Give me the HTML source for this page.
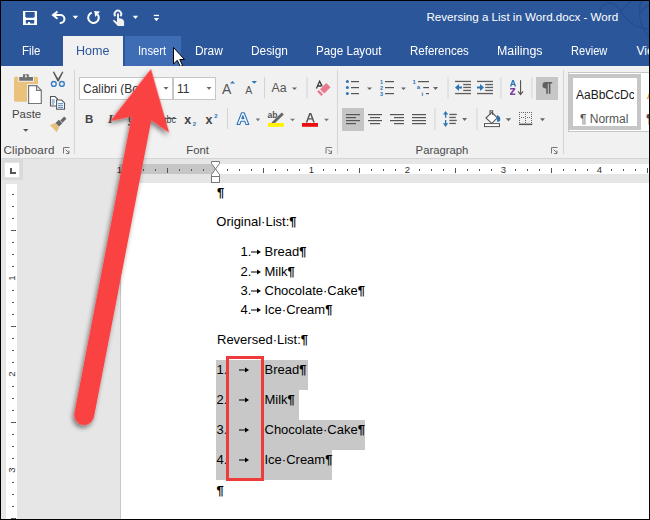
<!DOCTYPE html>
<html><head><meta charset="utf-8">
<style>
*{margin:0;padding:0;box-sizing:border-box}
html,body{width:650px;height:520px;overflow:hidden;background:#E6E6E6}
body{position:relative;font-family:"Liberation Sans",sans-serif}
.a{position:absolute}
.t{position:absolute;line-height:1;white-space:nowrap}
#title{left:0;top:0;width:650px;height:66px;background:#2B579A}
#ribbon{left:0;top:66px;width:650px;height:93px;background:#F1F1F1;border-bottom:1px solid #D5D5D5}
.tab{color:#fff;font-size:12px}
.sep{position:absolute;width:1px;background:#D4D4D4}
.gl{color:#4a4a4a;font-size:11px}
.doc{color:#000;font-size:13px}
</style></head><body>

<div id="title" class="a"></div>
<!-- decorative circles -->
<svg class="a" style="left:560px;top:0" width="90" height="66" viewBox="560 0 90 66">
  <g fill="none" stroke="#234D8C" stroke-width="1.3">
    <path d="M600.5 11 C600 3, 613 -1, 620 10 S633 27, 650 29.5"/>
    <path d="M620 12 L632 0"/>
    <path d="M642 0 C637 10, 639 26, 650 38"/>
    <path d="M641 13 C643 8, 646 6, 650 5"/>
  </g>
</svg>

<!-- QAT icons -->
<svg class="a" style="left:0;top:0" width="170" height="36" viewBox="0 0 170 36">
  <rect x="23" y="11" width="14" height="14" fill="#fff"/>
  <path d="M25.3 12.1 H34.7 V16.6 L33.6 17.7 H26.4 L25.3 16.6 Z" fill="#2B579A"/>
  <path d="M25.8 20 H34.2 V23.6 H30.1 V21.9 H28 V23.6 H25.8 Z" fill="#2B579A"/>
  <g fill="none" stroke="#fff" stroke-width="2">
    <path d="M57.5 11.5 L53 15.1 L57.5 18.7"/>
    <path d="M53 15.1 H60.5 A3.95 3.95 0 0 1 60.5 23 H59.8"/>
  </g>
  <path d="M72.6 15.8 H78.2 L75.4 19.1 Z" fill="#fff"/>
  <path d="M91.8 12.6 A5.3 5.3 0 1 0 97.6 14.3" fill="none" stroke="#fff" stroke-width="2"/>
  <path d="M94.2 11 L100 11.4 L95.3 17 Z" fill="#fff"/>
  <path d="M115.5 16.2 A3.3 3.3 0 1 1 120.3 16.2" fill="none" stroke="#F0F0F0" stroke-width="1.9"/>
  <path d="M117 13.5 H119 V18.2 Q123.6 18.6 124.1 21.6 V25.9 H117.8 L112.8 20.8 Q113.3 19.7 114.6 20.3 L117 22 Z" fill="#F0F0F0"/>
  <path d="M132.7 15.8 H138.2 L135.45 19.1 Z" fill="#fff"/>
  <rect x="153.8" y="14.8" width="5.2" height="1.3" fill="#fff"/>
  <path d="M153.8 18 H159 L156.4 21.3 Z" fill="#fff"/>
</svg>

<div class="t" style="left:426.5px;top:11.3px;font-size:11.6px;color:#fff">Reversing a List in Word.docx - Word</div>

<!-- tabs -->
<div class="a" style="left:63px;top:36px;width:60px;height:30px;background:#F1F1F1"></div>
<div class="a" style="left:124.5px;top:36px;width:56.7px;height:30px;background:#3E6DB6"></div>
<div class="t tab" style="left:21.8px;top:44.7px;transform:scaleX(0.956);transform-origin:0 0">File</div>
<div class="t tab" style="left:76.0px;top:44.7px;color:#2B579A;transform:scaleX(1.048);transform-origin:0 0">Home</div>
<div class="t tab" style="left:138.2px;top:44.9px;transform:scaleX(0.937);transform-origin:0 0">Insert</div>
<div class="t tab" style="left:195.2px;top:44.7px;transform:scaleX(0.993);transform-origin:0 0">Draw</div>
<div class="t tab" style="left:251.0px;top:44.7px;transform:scaleX(0.989);transform-origin:0 0">Design</div>
<div class="t tab" style="left:316.0px;top:44.7px;transform:scaleX(0.970);transform-origin:0 0">Page Layout</div>
<div class="t tab" style="left:410.0px;top:44.7px;transform:scaleX(0.958);transform-origin:0 0">References</div>
<div class="t tab" style="left:497.0px;top:44.7px;transform:scaleX(1.035);transform-origin:0 0">Mailings</div>
<div class="t tab" style="left:571.0px;top:44.7px;transform:scaleX(0.923);transform-origin:0 0">Review</div>
<div class="t tab" style="left:636.5px;top:44.7px">Vie</div>

<div id="ribbon" class="a"></div>
<!-- ============ RIBBON CONTENT ============ -->
<!-- Clipboard group -->
<svg class="a" style="left:0;top:66px" width="80" height="92" viewBox="0 66 80 92">
  <!-- paste clipboard -->
  <rect x="14" y="76.8" width="24" height="25" rx="1.6" fill="#EAC27C"/>
  <path d="M18.2 76 H24 V74.5 Q24 73.2 25.3 73.2 H27 Q28.3 73.2 28.3 74.5 V76 H34 V81.8 H18.2 Z" fill="#F1F1F1"/>
  <path d="M19.2 77 H23 V74.2 H28.8 V77 H33 V80.7 H19.2 Z" fill="#707070"/>
  <rect x="25" y="75.3" width="1.8" height="2" fill="#F1F1F1"/>
  <rect x="27" y="84" width="15.8" height="21" fill="#F1F1F1"/>
  <path d="M28.6 85.6 H36.6 L41.3 90.3 V103.5 H28.6 Z" fill="#fff" stroke="#777" stroke-width="1.2"/>
  <path d="M36.6 85.6 V90.3 H41.3" fill="none" stroke="#777" stroke-width="1.2"/>
  <!-- dropdown -->
  <path d="M23 129 H28.5 L25.75 131.8 Z" fill="#555"/>
  <!-- scissors -->
  <path d="M52.8 72 L54 71.6 L59.2 80.4 L57.6 81.4 Z" fill="#555"/>
  <path d="M63.4 72 L62.2 71.6 L57 80.4 L58.6 81.4 Z" fill="#555"/>
  <g fill="none" stroke="#3D7EC4" stroke-width="1.4">
    <circle cx="53.8" cy="83.9" r="2.4"/><circle cx="61.9" cy="83.9" r="2.4"/>
  </g>
  <!-- copy -->
  <g fill="#fff" stroke="#555" stroke-width="1.1">
    <path d="M50.5 96.5 H55 L57.5 99 V106 H50.5 Z"/>
    <path d="M56.6 100 H61.6 L64.5 102.9 V109.3 H56.6 Z"/>
  </g>
  <g fill="#3D7EC4">
    <rect x="51.8" y="99.5" width="3" height="1"/><rect x="51.8" y="101.5" width="3" height="1"/><rect x="51.8" y="103.5" width="2.2" height="1"/>
    <rect x="58" y="103.2" width="5" height="1"/><rect x="58" y="105.2" width="5" height="1"/><rect x="58" y="107.2" width="5" height="1"/>
  </g>
  <!-- format painter -->
  <path d="M50 125.3 L55.3 122.8 L59.3 126.8 L56.8 132.2 Z" fill="#E8C07D"/>
  <path d="M55.6 123 L58.8 119.8 L62.3 123.3 L59.1 126.5 Z" fill="#666"/>
  <path d="M60.3 120.5 L64.2 116.6 L66.4 118.8 L62.5 122.7 Z" fill="#666"/>
  <!-- dialog launcher -->
  <g fill="none" stroke="#777" stroke-width="1"><path d="M63.5 153.5 V147.5 H69.5"/><path d="M65.5 149.5 L69 153 M69 150.5 V153.5 H66"/></g>
</svg>
<div class="t" style="left:12px;top:109.2px;font-size:11.4px;color:#444">Paste</div>
<div class="t gl" style="left:3.6px;top:144.4px;font-size:11.6px;color:#555;letter-spacing:0.15px;color:#4a4a4a">Clipboard</div>
<div class="sep" style="left:74px;top:70px;height:84px"></div>

<!-- Font group -->
<div class="a" style="left:79px;top:77px;width:94px;height:23px;background:#fff;border:1px solid #C6C6C6"></div>
<div class="a" style="left:173px;top:77px;width:43px;height:23px;background:#fff;border:1px solid #C6C6C6"></div>
<div class="t" style="left:83px;top:83px;font-size:12px;color:#333;width:68px;overflow:hidden">Calibri (Bo</div>
<div class="t" style="left:177px;top:83px;font-size:12px;color:#333">11</div>
<svg class="a" style="left:70px;top:66px" width="270" height="92" viewBox="70 66 270 92">
  <path d="M163.5 87 H168.5 L166 89.7 Z" fill="#666"/>
  <path d="M206.5 87 H211.5 L209 89.7 Z" fill="#666"/>
  <!-- grow/shrink -->
  <text x="222" y="94" font-family="Liberation Sans" font-size="14" fill="#555">A</text>
  <path d="M230 83.6 H235 L232.5 81 Z" fill="#2E75B6"/>
  <text x="245.3" y="94" font-family="Liberation Sans" font-size="10.5" fill="#555">A</text>
  <path d="M251.6 81 H257 L254.3 83.8 Z" fill="#2E75B6"/>
  <rect x="264" y="77" width="1" height="21.5" fill="#D4D4D4"/>
  <text x="271.5" y="92" font-family="Liberation Sans" font-size="12.3" fill="#555">Aa</text>
  <path d="M292 87.4 H297 L294.5 90 Z" fill="#666"/>
  <rect x="306.5" y="77" width="1" height="21.5" fill="#D4D4D4"/>
  <!-- clear formatting -->
  <path d="M316.4 88.6 L319.6 81.3 L322.2 86.4 M317.8 86 H321" fill="none" stroke="#3a3a3a" stroke-width="1.3"/>
  <path d="M320 89.2 L326.3 82.9 L330.6 87.2 L324.3 93.5 Z" fill="#E8798F"/>
  <path d="M317.2 91.7 L318.9 90 L323.1 94.2 L321.4 95.9 Z" fill="#E8798F"/>
  <!-- row 2 -->
  <text x="85" y="123.3" font-family="Liberation Sans" font-weight="bold" font-size="11.5" fill="#444">B</text>
  <text x="108" y="122.8" font-family="Liberation Serif" font-style="italic" font-weight="bold" font-size="12.5" fill="#444">I</text>
  <text x="128" y="123.3" font-family="Liberation Sans" font-size="11.5" fill="#444" text-decoration="underline">U</text>
  <text x="161.5" y="122.8" font-family="Liberation Sans" font-size="11.5" fill="#444" textLength="14.5" lengthAdjust="spacingAndGlyphs">abc</text>
  <rect x="161.5" y="118" width="15" height="1" fill="#555"/>
  <text x="184.2" y="123.6" font-family="Liberation Sans" font-weight="bold" font-size="12.5" fill="#444">x</text>
  <text x="192.8" y="125.8" font-family="Liberation Sans" font-weight="bold" font-size="6" fill="#2E75B6">2</text>
  <text x="205.6" y="123.6" font-family="Liberation Sans" font-weight="bold" font-size="12.5" fill="#444">x</text>
  <text x="214.3" y="117.6" font-family="Liberation Sans" font-weight="bold" font-size="6" fill="#2E75B6">2</text>
  <rect x="227" y="108" width="1" height="21" fill="#D4D4D4"/>
  <!-- text effects -->
  <path d="M237 124.5 L241.6 112.8 H244.2 L248.8 124.5 H246 L244.8 121.2 H241 L239.8 124.5 Z M241.8 118.8 H244 L242.9 115.6 Z" fill="#fff" stroke="#2E75B6" stroke-width="1.1" stroke-linejoin="round"/>
  <path d="M255.6 118.6 H260.2 L257.9 121.2 Z" fill="#777"/>
  <!-- highlight -->
  <text x="267.6" y="118.3" font-family="Liberation Sans" font-weight="bold" font-size="8.6" fill="#555">ab</text>
  <path d="M271.5 122.5 L281.8 112.6 L283.8 114.6 L273.5 124.5 Z" fill="#666"/>
  <rect x="268" y="123" width="15.8" height="3.8" fill="#FFF100"/>
  <path d="M290 118.7 H295 L292.5 121.2 Z" fill="#777"/>
  <!-- font color -->
  <path d="M305.8 122.4 L309.3 113 H311.3 L314.8 122.4 H313.2 L312.2 119.6 H308.4 L307.4 122.4 Z M308.9 118.2 H311.7 L310.3 114.4 Z" fill="#555"/>
  <rect x="302" y="123" width="16" height="3.8" fill="#E81010"/>
  <path d="M324 118.7 H329 L326.5 121.2 Z" fill="#777"/>
  <g fill="none" stroke="#777" stroke-width="1"><path d="M326 153.5 V147.5 H332"/><path d="M328 149.5 L331.5 153 M331.5 150.5 V153.5 H328.5"/></g>
</svg>
<div class="t gl" style="left:186.3px;top:144.8px;font-size:11.3px;color:#4a4a4a">Font</div>
<div class="sep" style="left:337px;top:70px;height:84px"></div>

<!-- Paragraph group -->
<svg class="a" style="left:337px;top:66px" width="230" height="92" viewBox="337 66 230 92">
  <g fill="#2E75B6">
    <circle cx="347.4" cy="81.4" r="1.5"/><circle cx="347.4" cy="87.4" r="1.5"/><circle cx="347.4" cy="93.4" r="1.5"/>
  </g>
  <g fill="#555"><rect x="351" y="81" width="8" height="1.2"/><rect x="351" y="87" width="8" height="1.2"/><rect x="351" y="93" width="8" height="1.2"/></g>
  <path d="M367 87.4 H372 L369.5 90 Z" fill="#666"/>
  <g font-family="Liberation Sans" font-size="5.5" font-weight="bold" fill="#2E75B6">
    <text x="380" y="84">1</text><text x="380" y="90">2</text><text x="380" y="96">3</text>
  </g>
  <g fill="#555"><rect x="385" y="81" width="9" height="1.2"/><rect x="385" y="87" width="9" height="1.2"/><rect x="385" y="93" width="9" height="1.2"/></g>
  <path d="M401 87.4 H406 L403.5 90 Z" fill="#666"/>
  <g font-family="Liberation Sans" font-size="6" font-weight="bold" fill="#2E75B6">
    <text x="412.6" y="84">1</text><text x="416.8" y="89">a</text><text x="421.5" y="96">i</text>
  </g>
  <g fill="#555"><rect x="418" y="81" width="11" height="1.2"/><rect x="423.2" y="87" width="5.8" height="1.2"/><rect x="426" y="93" width="3" height="1.2"/></g>
  <path d="M433 87 H438.1 L435.55 90.1 Z" fill="#666"/>
  <rect x="447.5" y="77" width="1" height="21.5" fill="#D4D4D4"/>
  <!-- decrease indent -->
  <g fill="#5f5f5f">
    <rect x="455" y="80.8" width="16" height="1.3"/><rect x="463.2" y="83.9" width="7.8" height="1.3"/><rect x="463.2" y="86.8" width="7.8" height="1.3"/><rect x="463.2" y="89.8" width="7.8" height="1.3"/><rect x="455" y="92.9" width="16" height="1.3"/>
    <rect x="477" y="80.8" width="16" height="1.3"/><rect x="485.2" y="83.9" width="7.8" height="1.3"/><rect x="485.2" y="86.8" width="7.8" height="1.3"/><rect x="485.2" y="89.8" width="7.8" height="1.3"/><rect x="477" y="92.9" width="16" height="1.3"/>
  </g>
  <g fill="#2E75B6">
    <path d="M455 87.4 L459 83.9 V86.4 H462 V88.5 H459 V91 Z"/>
    <path d="M484 87.4 L480 83.9 V86.4 H477 V88.5 H480 V91 Z"/>
  </g>
  <rect x="500.4" y="77" width="1" height="21.5" fill="#D4D4D4"/>
  <!-- sort -->
  <path d="M509.9 86.5 L512.3 80 H513.8 L516.2 86.5 H514.7 L514.2 85 H511.9 L511.4 86.5 Z M512.3 83.7 H513.8 L513.05 81.5 Z" fill="#2E75B6"/>
  <path d="M510.1 88.1 H515.2 V89.5 L512.1 93.6 H515.3 V95 H510 V93.6 L513.1 89.5 H510.1 Z" fill="#8040A8"/>
  <rect x="520" y="80.2" width="1.1" height="14.3" fill="#555"/>
  <path d="M518.1 91.4 L520.55 94.6 L523 91.4" fill="none" stroke="#555" stroke-width="1.1"/>
  <rect x="531.4" y="77" width="1" height="21.5" fill="#D4D4D4"/>
  <!-- pilcrow button -->
  <rect x="536" y="77" width="22" height="23" fill="#C6C6C6"/>
  <path d="M552.2 82 H545.8 A3.3 3.2 0 0 0 545.8 88.4 H546.2 V93.8 H547.8 V83.4 H548.8 V93.8 H550.4 V83.4 H552.2 Z" fill="#5f5f5f"/>
  <!-- row 2: align -->
  <rect x="342" y="108" width="22" height="23" fill="#C5C5C5"/>
  <g fill="#555">
    <rect x="346" y="114" width="14" height="1.2"/><rect x="346" y="117" width="10" height="1.2"/><rect x="346" y="120" width="14" height="1.2"/><rect x="346" y="123" width="10" height="1.2"/>
    <rect x="368" y="114" width="14" height="1.2"/><rect x="370" y="117" width="10" height="1.2"/><rect x="368" y="120" width="14" height="1.2"/><rect x="370" y="123" width="10" height="1.2"/>
    <rect x="390" y="114" width="14" height="1.2"/><rect x="394" y="117" width="10" height="1.2"/><rect x="390" y="120" width="14" height="1.2"/><rect x="394" y="123" width="10" height="1.2"/>
    <rect x="412" y="114" width="14" height="1.2"/><rect x="412" y="117" width="14" height="1.2"/><rect x="412" y="120" width="14" height="1.2"/><rect x="412" y="123" width="14" height="1.2"/>
  </g>
  <rect x="434.4" y="108" width="1" height="22" fill="#D4D4D4"/>
  <!-- line spacing -->
  <g fill="#5f5f5f"><rect x="449.3" y="113.8" width="7.5" height="1.3"/><rect x="449.3" y="116.8" width="6.5" height="1.3"/><rect x="449.3" y="119.8" width="7.5" height="1.3"/><rect x="449.3" y="122.8" width="6.5" height="1.3"/></g>
  <g fill="#2E75B6">
    <path d="M445.6 111 L448.2 114.4 H446.3 V117.8 H445 V114.4 H443 Z"/>
    <path d="M445.6 126.9 L448.2 123.2 H446.3 V120.1 H445 V123.2 H443 Z"/>
  </g>
  <path d="M462.1 118 H467 L464.55 120.9 Z" fill="#666"/>
  <rect x="476.4" y="108" width="1" height="22" fill="#D4D4D4"/>
  <!-- shading -->
  <path d="M486 118 L491.8 112.4 L497.4 117.8 L491.8 123.3 Z" fill="#fff" stroke="#555" stroke-width="1.1"/>
  <path d="M490 115 V110.8 H492.6 V115" fill="none" stroke="#555" stroke-width="1.1"/>
  <path d="M497 115 Q501 116.5 500.2 120.4 Q499.2 122.2 497 121.4 Z" fill="#2E75B6"/>
  <rect x="484.5" y="123.6" width="15" height="3" fill="#fff" stroke="#555" stroke-width="1"/>
  <path d="M505.7 118.2 H511.2 L508.45 121.2 Z" fill="#666"/>
  <!-- borders -->
  <g fill="#666"><rect x="519" y="112" width="1" height="1"/><rect x="519" y="114" width="1" height="1"/><rect x="519" y="116" width="1" height="1"/><rect x="519" y="118" width="1" height="1"/><rect x="519" y="120" width="1" height="1"/><rect x="519" y="122" width="1" height="1"/><rect x="525" y="112" width="1" height="1"/><rect x="525" y="114" width="1" height="1"/><rect x="525" y="116" width="1" height="1"/><rect x="525" y="118" width="1" height="1"/><rect x="525" y="120" width="1" height="1"/><rect x="525" y="122" width="1" height="1"/><rect x="531" y="112" width="1" height="1"/><rect x="531" y="114" width="1" height="1"/><rect x="531" y="116" width="1" height="1"/><rect x="531" y="118" width="1" height="1"/><rect x="531" y="120" width="1" height="1"/><rect x="531" y="122" width="1" height="1"/><rect x="521" y="112" width="1" height="1"/><rect x="523" y="112" width="1" height="1"/><rect x="527" y="112" width="1" height="1"/><rect x="529" y="112" width="1" height="1"/><rect x="521" y="117" width="1" height="1"/><rect x="523" y="117" width="1" height="1"/><rect x="527" y="117" width="1" height="1"/><rect x="529" y="117" width="1" height="1"/></g>
  <rect x="519" y="123.6" width="13.3" height="1.5" fill="#555"/>
  <path d="M540 118.2 H545 L542.5 121.2 Z" fill="#666"/>
  <g fill="none" stroke="#777" stroke-width="1"><path d="M551.5 153.5 V147.5 H557.5"/><path d="M553.5 149.5 L557 153 M557 150.5 V153.5 H554"/></g>
</svg>
<div class="t gl" style="left:415.6px;top:144.8px;font-size:11.3px;color:#4a4a4a">Paragraph</div>
<div class="sep" style="left:562.5px;top:70px;height:84px"></div>

<!-- Styles gallery -->
<div class="a" style="left:568px;top:72px;width:90px;height:60px;background:#fff;border:1px solid #C6C6C6"></div>
<div class="a" style="left:569px;top:74px;width:72px;height:56px;border:4px solid #C6C6C6"></div>
<div class="t" style="left:576px;top:89px;font-size:12px;color:#1a1a1a;width:58px;overflow:hidden">AaBbCcDc</div>
<div class="t" style="left:580px;top:113px;font-size:12px;color:#555">¶ Normal</div>
<div class="t" style="left:647px;top:89px;font-size:12px;color:#E08A00">A</div>
<div class="t" style="left:646px;top:113px;font-size:12px;color:#555">¶</div>



<!-- ============ RULER + WORKSPACE ============ -->
<div class="a" style="left:2px;top:159px;width:21px;height:21px;background:#DADADA"></div>
<div class="a" style="left:4px;top:161.5px;width:16px;height:16px;background:#fff;border:1.3px solid #E2E2E2"></div>
<div class="a" style="left:10px;top:168px;width:2px;height:6px;background:#555"></div>
<div class="a" style="left:10px;top:172px;width:6px;height:2px;background:#555"></div>
<!-- horizontal ruler -->
<div class="a" style="left:119px;top:164px;width:97px;height:10px;background:#C6C6C6"></div>
<div class="a" style="left:216px;top:164px;width:434px;height:10px;background:#fff"></div>
<svg class="a" style="left:100px;top:158px" width="550" height="30" viewBox="100 158 550 30">
  <g fill="#555"><rect x="131" y="169" width="1" height="2"/><rect x="143" y="169" width="1" height="2"/><rect x="155" y="169" width="1" height="2"/><rect x="167" y="168" width="1" height="5"/><rect x="179" y="169" width="1" height="2"/><rect x="191" y="169" width="1" height="2"/><rect x="203" y="169" width="1" height="2"/><rect x="227" y="169" width="1" height="2"/><rect x="239" y="169" width="1" height="2"/><rect x="251" y="169" width="1" height="2"/><rect x="263" y="168" width="1" height="5"/><rect x="275" y="169" width="1" height="2"/><rect x="287" y="169" width="1" height="2"/><rect x="299" y="169" width="1" height="2"/><rect x="323" y="169" width="1" height="2"/><rect x="335" y="169" width="1" height="2"/><rect x="347" y="169" width="1" height="2"/><rect x="359" y="168" width="1" height="5"/><rect x="371" y="169" width="1" height="2"/><rect x="383" y="169" width="1" height="2"/><rect x="395" y="169" width="1" height="2"/><rect x="419" y="169" width="1" height="2"/><rect x="431" y="169" width="1" height="2"/><rect x="443" y="169" width="1" height="2"/><rect x="455" y="168" width="1" height="5"/><rect x="467" y="169" width="1" height="2"/><rect x="479" y="169" width="1" height="2"/><rect x="491" y="169" width="1" height="2"/><rect x="515" y="169" width="1" height="2"/><rect x="527" y="169" width="1" height="2"/><rect x="539" y="169" width="1" height="2"/><rect x="551" y="168" width="1" height="5"/><rect x="563" y="169" width="1" height="2"/><rect x="575" y="169" width="1" height="2"/><rect x="587" y="169" width="1" height="2"/><rect x="611" y="169" width="1" height="2"/><rect x="623" y="169" width="1" height="2"/><rect x="635" y="169" width="1" height="2"/><rect x="647" y="168" width="1" height="5"/></g>
  <g font-family="Liberation Sans" font-size="9.5" fill="#333" text-anchor="middle">
    <text x="119.3" y="173.2">1</text><text x="311.5" y="173.2">1</text><text x="407.5" y="173.2">2</text><text x="503.5" y="173.2">3</text><text x="599.5" y="173.2">4</text>
  </g>
  <!-- indent marker -->
  <path d="M211.5 161.5 H219.5 V163.5 L215.5 169 L219.5 174.5 V176.5 H211.5 V174.5 L215.5 169 L211.5 163.5 Z" fill="#fff" stroke="#777" stroke-width="1"/>
  <rect x="211.5" y="176.5" width="8" height="6" fill="#fff" stroke="#777" stroke-width="1"/>
</svg>
<!-- vertical ruler -->
<div class="a" style="left:6px;top:184px;width:11px;height:340px;background:#fff"></div>
<svg class="a" style="left:0;top:180px" width="30" height="340" viewBox="0 180 30 340"><g fill="#555"><rect x="12" y="194" width="2" height="1"/><rect x="12" y="206" width="2" height="1"/><rect x="12" y="218" width="2" height="1"/><rect x="11" y="230" width="5" height="1"/><rect x="12" y="242" width="2" height="1"/><rect x="12" y="254" width="2" height="1"/><rect x="12" y="266" width="2" height="1"/><rect x="12" y="290" width="2" height="1"/><rect x="12" y="302" width="2" height="1"/><rect x="12" y="314" width="2" height="1"/><rect x="11" y="326" width="5" height="1"/><rect x="12" y="338" width="2" height="1"/><rect x="12" y="350" width="2" height="1"/><rect x="12" y="362" width="2" height="1"/><rect x="12" y="386" width="2" height="1"/><rect x="12" y="398" width="2" height="1"/><rect x="12" y="410" width="2" height="1"/><rect x="11" y="422" width="5" height="1"/><rect x="12" y="434" width="2" height="1"/><rect x="12" y="446" width="2" height="1"/><rect x="12" y="458" width="2" height="1"/><rect x="12" y="482" width="2" height="1"/><rect x="12" y="494" width="2" height="1"/><rect x="12" y="506" width="2" height="1"/><rect x="11" y="518" width="5" height="1"/></g><g font-family="Liberation Sans" font-size="9.5" fill="#333"><text transform="translate(15.4 278) rotate(-90)" text-anchor="middle" x="0" y="0">1</text><text transform="translate(15.4 374) rotate(-90)" text-anchor="middle" x="0" y="0">2</text><text transform="translate(15.4 470) rotate(-90)" text-anchor="middle" x="0" y="0">3</text></g></svg>

<!-- page -->
<div class="a" style="left:120px;top:183px;width:530px;height:337px;background:#fff;border-left:1px solid #C8C8C8"></div>

<!-- document text -->
<div class="t doc" style="left:217px;top:185.5px"><b>¶</b></div>
<div class="t doc" style="left:216.3px;top:215.4px">Original·List:<b>¶</b></div>
<div class="t doc" style="left:240.5px;top:245px">1.</div>
<svg class="a" style="left:251px;top:249px" width="10" height="6" viewBox="0 0 10 6"><rect x="0" y="2.5" width="7" height="1" fill="#000"/><path d="M6 0.5 L10 3 L6 5.5 Z" fill="#000"/></svg>
<div class="t doc" style="left:264.5px;top:245px">Bread<b>¶</b></div>
<div class="t doc" style="left:240.5px;top:265.2px">2.</div>
<svg class="a" style="left:251px;top:269.2px" width="10" height="6" viewBox="0 0 10 6"><rect x="0" y="2.5" width="7" height="1" fill="#000"/><path d="M6 0.5 L10 3 L6 5.5 Z" fill="#000"/></svg>
<div class="t doc" style="left:264.5px;top:265.2px">Milk<b>¶</b></div>
<div class="t doc" style="left:240.5px;top:284.4px">3.</div>
<svg class="a" style="left:251px;top:288.4px" width="10" height="6" viewBox="0 0 10 6"><rect x="0" y="2.5" width="7" height="1" fill="#000"/><path d="M6 0.5 L10 3 L6 5.5 Z" fill="#000"/></svg>
<div class="t doc" style="left:264.5px;top:284.4px">Chocolate·Cake<b>¶</b></div>
<div class="t doc" style="left:240.5px;top:303.2px">4.</div>
<svg class="a" style="left:251px;top:307.2px" width="10" height="6" viewBox="0 0 10 6"><rect x="0" y="2.5" width="7" height="1" fill="#000"/><path d="M6 0.5 L10 3 L6 5.5 Z" fill="#000"/></svg>
<div class="t doc" style="left:264.5px;top:303.2px">Ice·Cream<b>¶</b></div>
<div class="t doc" style="left:217px;top:333px">Reversed·List:<b>¶</b></div>
<div class="a" style="left:216px;top:360px;width:91.8px;height:30px;background:#C8C8C8"></div>
<div class="a" style="left:216px;top:390px;width:83px;height:30px;background:#C8C8C8"></div>
<div class="a" style="left:216px;top:420px;width:148.9px;height:30px;background:#C8C8C8"></div>
<div class="a" style="left:216px;top:450px;width:116px;height:30px;background:#C8C8C8"></div>
<div class="t doc" style="left:216.6px;top:363.0px">1.</div>
<svg class="a" style="left:239px;top:367.0px" width="10" height="6" viewBox="0 0 10 6"><rect x="0" y="2.5" width="7" height="1" fill="#000"/><path d="M6 0.5 L10 3 L6 5.5 Z" fill="#000"/></svg>
<div class="t doc" style="left:264.5px;top:363.0px">Bread<b>¶</b></div>
<div class="t doc" style="left:216.6px;top:392.9px">2.</div>
<svg class="a" style="left:239px;top:396.9px" width="10" height="6" viewBox="0 0 10 6"><rect x="0" y="2.5" width="7" height="1" fill="#000"/><path d="M6 0.5 L10 3 L6 5.5 Z" fill="#000"/></svg>
<div class="t doc" style="left:264.5px;top:392.9px">Milk<b>¶</b></div>
<div class="t doc" style="left:216.6px;top:422.5px">3.</div>
<svg class="a" style="left:239px;top:426.5px" width="10" height="6" viewBox="0 0 10 6"><rect x="0" y="2.5" width="7" height="1" fill="#000"/><path d="M6 0.5 L10 3 L6 5.5 Z" fill="#000"/></svg>
<div class="t doc" style="left:264.5px;top:422.5px">Chocolate·Cake<b>¶</b></div>
<div class="t doc" style="left:216.6px;top:452.6px">4.</div>
<svg class="a" style="left:239px;top:456.6px" width="10" height="6" viewBox="0 0 10 6"><rect x="0" y="2.5" width="7" height="1" fill="#000"/><path d="M6 0.5 L10 3 L6 5.5 Z" fill="#000"/></svg>
<div class="t doc" style="left:264.5px;top:452.6px">Ice·Cream<b>¶</b></div>
<div class="t doc" style="left:216.5px;top:483.5px"><b>¶</b></div>
<div class="a" style="left:226px;top:356px;width:38px;height:125px;border:3px solid #EE3C3C"></div>


<!-- mouse cursor -->
<svg class="a" style="left:170px;top:44px;z-index:20" width="20" height="22" viewBox="170 44 20 22">
  <path d="M173.5 47.5 V64 L177.3 60.3 L180.3 66.5 L182.6 65.5 L179.7 59.5 H184.5 Z" fill="#fff" stroke="#000" stroke-width="1" stroke-linejoin="miter"/>
</svg>
<!-- red arrow -->
<svg class="a" style="left:0;top:0;z-index:30" width="650" height="520" viewBox="0 0 650 520">
  <defs>
    <filter id="sh" x="-50%" y="-20%" width="200%" height="140%">
      <feGaussianBlur in="SourceAlpha" stdDeviation="2.4"/>
      <feOffset dx="-0.8" dy="3" result="b"/>
      <feComponentTransfer><feFuncA type="linear" slope="0.5"/></feComponentTransfer>
      <feMerge><feMergeNode/><feMergeNode in="SourceGraphic"/></feMerge>
    </filter>
  </defs>
  <g transform="translate(151 69) rotate(10.93)" filter="url(#sh)">
    <path d="M0 0 L30 59.2 L10 50.2 L10 352.5 A10 10 0 0 1 -10 352.5 L-10 50.2 L-30.2 59 Z" fill="#FA4343"/>
  </g>
</svg>

<!-- black frame -->
<div class="a" style="left:0;top:0;width:650px;height:520px;border:1px solid #000;z-index:50"></div>
</body></html>
